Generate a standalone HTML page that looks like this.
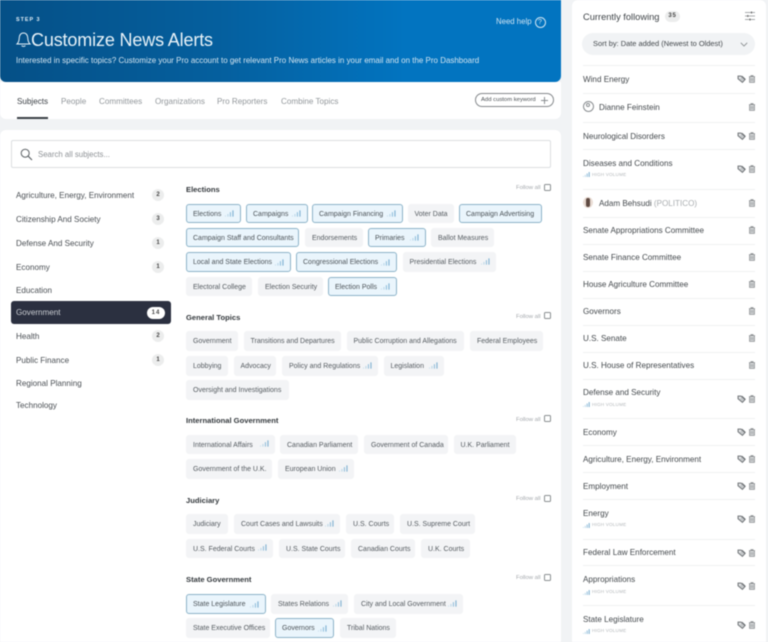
<!DOCTYPE html>
<html><head><meta charset="utf-8"><style>
*{box-sizing:border-box}
html,body{margin:0;padding:0;width:768px;height:642px;overflow:hidden;background:#f1f3f5;font-family:"Liberation Sans",sans-serif}
#r{position:relative;width:768px;height:642px;overflow:hidden;filter:blur(.4px)}
.a,.c,.s,.l,.i,.h,.f,.b,.n,.v,.t,.d,.x,.g,.k{position:absolute;white-space:nowrap}
.c,.s{height:19.500px;line-height:21px;font-size:7px;color:#555b60;padding-left:7px;background:#f3f4f6;border-radius:3px}
.s{background:#eaf5fc;border:1px solid #8db3c9;padding-left:6px;line-height:19.500px;color:#4c5358}
.c svg,.s svg{position:absolute;right:6px;top:5.500px;opacity:.8}
.l{left:16px;font-size:8.100px;color:#4a4f54;line-height:12px;margin-top:1px}
.b{left:152px;width:12px;height:12px;border-radius:50%;background:#eceded;font-size:6px;font-weight:bold;line-height:12px;text-align:center;color:#444}
.h{left:186px;font-size:7.600px;font-weight:bold;color:#33383c;line-height:10px;margin-top:.5px}
.f{left:516px;font-size:5.900px;color:#a5a9ad;line-height:8px;margin-top:1px}
.k{left:544px;width:7px;height:7px;border:.8px solid #8b8f92;border-radius:1.500px;background:#fff}
.n{left:583px;font-size:8.100px;color:#44494d;line-height:12px;margin-top:1px}
.v{left:592px;font-size:4.600px;color:#b3b7ba;line-height:6px;letter-spacing:.2px}
.d{left:583px;width:172px;height:1px;background:#f0f1f2}
.t{left:747.500px}.x{left:737px}
.g{left:583px}
</style></head><body><div id="r">
<svg width="0" height="0" style="position:absolute"><defs>
<symbol id="sg" viewBox="0 0 10 7"><rect x="0" y="5.600" width="1.100" height="1.400" fill="#c3dceb"/><rect x="2.700" y="4" width="1.100" height="3" fill="#a8cde3"/><rect x="5.400" y="2" width="1.200" height="5" fill="#7ab1d4"/><rect x="8.200" y="0" width="1.300" height="7" fill="#6aa5cb"/></symbol>
<symbol id="tr" viewBox="0 0 8 8"><path d="M1 1.600H7M3 1.600V.7H5V1.600M1.600 1.600V7.400H6.400V1.600Z" fill="#dfe1e2" stroke="#85898c" stroke-width=".8"/><path d="M3.200 3V6.200M4.800 3V6.200" stroke="#85898c" stroke-width=".7"/></symbol>
<symbol id="tg" viewBox="0 0 9 8"><path d="M1 1H4L8 4.600 5.400 7.400 1 3.800Z" fill="#c4c7c9" stroke="#62666a" stroke-width=".8"/><circle cx="3" cy="2.800" r=".7" fill="#fff"/><path d="M5 1 8.600 4.400" fill="none" stroke="#6a6e72" stroke-width=".7"/></symbol>
</defs></svg>

<div class="a" style="left:0;top:0;width:561px;height:82px;border-radius:0 0 6px 6px;background:linear-gradient(90deg,#055087 0%,#05609f 40%,#0274c0 72%,#0274c0 100%)"></div>
<div class="a" style="left:16px;top:17px;font-size:5.400px;font-weight:bold;letter-spacing:1px;color:#e6f0f7;line-height:7px">STEP 3</div>
<svg class="a" style="left:16px;top:31px" width="15" height="17" viewBox="0 0 15 17"><path d="M1 13H14C12.400 11.600 12 10.200 11.800 7.400 11.600 4 10 2 7.500 2S3.400 4 3.200 7.400C3 10.200 2.600 11.600 1 13ZM5.600 14.600C6.600 15.600 8.400 15.600 9.400 14.600" fill="none" stroke="#e8f2f8" stroke-width="1"/></svg>
<div class="a" style="left:31px;top:29px;font-size:18px;color:#e8f2f8;line-height:22px;letter-spacing:-.15px">Customize News Alerts</div>
<div class="a" style="left:16px;top:55px;font-size:7.950px;color:#d3e5f1;line-height:11px;letter-spacing:.02px">Interested in specific topics? Customize your Pro account to get relevant Pro News articles in your email and on the Pro Dashboard</div>
<div class="a" style="left:496px;top:16px;font-size:7.800px;color:#cfe4f3;line-height:12px">Need help</div>
<div class="a" style="left:534.500px;top:16.500px;width:11px;height:11px;border:1px solid #cfe4f3;border-radius:50%;font-size:7px;line-height:9px;text-align:center;color:#cfe4f3">?</div>

<div class="a" style="left:0;top:82px;width:561px;height:37px;background:#fff;border-radius:0 0 6px 6px"></div>
<div class="a" style="left:17px;top:95.500px;font-size:8.100px;color:#3c4146;line-height:12px">Subjects</div>
<div class="a" style="left:17px;top:117px;width:31px;height:1.500px;background:#3b4046"></div>
<div class="a" style="left:61px;top:95.500px;font-size:8.100px;color:#92979b;line-height:12px">People</div>
<div class="a" style="left:99px;top:95.500px;font-size:8.100px;color:#92979b;line-height:12px">Committees</div>
<div class="a" style="left:155px;top:95.500px;font-size:8.100px;color:#92979b;line-height:12px">Organizations</div>
<div class="a" style="left:217px;top:95.500px;font-size:8.100px;color:#92979b;line-height:12px">Pro Reporters</div>
<div class="a" style="left:281px;top:95.500px;font-size:8.100px;color:#92979b;line-height:12px">Combine Topics</div>
<div class="a" style="left:475px;top:93px;width:79px;height:14px;border:1px solid #85898c;border-radius:7px;font-size:5.900px;line-height:12px;padding-left:5px;color:#4b5054">Add custom keyword</div>
<div class="a" style="left:541px;top:99.500px;width:7px;height:1px;background:#8a8e91"></div>
<div class="a" style="left:544px;top:96.500px;width:1px;height:7px;background:#8a8e91"></div>

<div class="a" style="left:0;top:130px;width:561px;height:512px;background:#fff;border-radius:6px 6px 0 0"></div>
<div class="a" style="left:11px;top:140px;width:540px;height:27.500px;border:1px solid #dcdfe1;border-radius:2px;background:#fff"></div>
<svg class="a" style="left:20px;top:148px" width="13" height="13" viewBox="0 0 13 13"><circle cx="5.200" cy="5.200" r="4" fill="none" stroke="#5c6165" stroke-width="1"/><path d="M8.200 8.200 12 12" stroke="#5c6165" stroke-width="1.100"/></svg>
<div class="a" style="left:38px;top:149px;font-size:7.800px;color:#8e9296;line-height:12px">Search all subjects...</div>

<div class="l" style="top:189px">Agriculture, Energy, Environment</div><div class="b" style="top:189px">2</div>
<div class="l" style="top:213px">Citizenship And Society</div><div class="b" style="top:213px">3</div>
<div class="l" style="top:237px">Defense And Security</div><div class="b" style="top:237px">1</div>
<div class="l" style="top:261px">Economy</div><div class="b" style="top:261px">1</div>
<div class="l" style="top:284px">Education</div>
<div class="a" style="left:11px;top:301px;width:159.500px;height:23px;border-radius:3px;background:#2b3040"></div>
<div class="l" style="top:305.500px;color:#c9ccd1">Government</div>
<div class="a" style="left:147px;top:306.500px;width:18px;height:12px;border-radius:6px;background:#fff;font-size:6px;font-weight:bold;line-height:12px;text-align:center;color:#444;letter-spacing:1px">14</div>
<div class="l" style="top:330px">Health</div><div class="b" style="top:330px">2</div>
<div class="l" style="top:354px">Public Finance</div><div class="b" style="top:354px">1</div>
<div class="l" style="top:377px">Regional Planning</div>
<div class="l" style="top:399px">Technology</div>

<div class="h" style="top:184px">Elections</div>
<div class="f" style="top:183px">Follow all</div><div class="k" style="top:183.500px"></div>
<div class="s" style="left:186px;top:203.500px;width:55px">Elections<svg width="9" height="7"><use href="#sg"/></svg></div>
<div class="s" style="left:246px;top:203.500px;width:61.500px">Campaigns<svg width="9" height="7"><use href="#sg"/></svg></div>
<div class="s" style="left:312px;top:203.500px;width:90.500px">Campaign Financing<svg width="9" height="7"><use href="#sg"/></svg></div>
<div class="c" style="left:407.500px;top:203.500px;width:46px">Voter Data</div>
<div class="s" style="left:459px;top:203.500px;width:82.500px">Campaign Advertising</div>
<div class="s" style="left:186px;top:227.500px;width:113px">Campaign Staff and Consultants</div>
<div class="c" style="left:305px;top:227.500px;width:58px">Endorsements</div>
<div class="s" style="left:368px;top:227.500px;width:57.500px">Primaries<svg width="9" height="7"><use href="#sg"/></svg></div>
<div class="c" style="left:431px;top:227.500px;width:63px">Ballot Measures</div>
<div class="s" style="left:186px;top:252px;width:104.500px">Local and State Elections<svg width="9" height="7"><use href="#sg"/></svg></div>
<div class="s" style="left:296px;top:252px;width:101px">Congressional Elections<svg width="9" height="7"><use href="#sg"/></svg></div>
<div class="c" style="left:402.500px;top:252px;width:93.500px">Presidential Elections<svg width="9" height="7"><use href="#sg"/></svg></div>
<div class="c" style="left:186px;top:276.500px;width:66px">Electoral College</div>
<div class="c" style="left:258px;top:276.500px;width:65px">Election Security</div>
<div class="s" style="left:328px;top:276.500px;width:69px">Election Polls<svg width="9" height="7"><use href="#sg"/></svg></div>

<div class="h" style="top:312.500px">General Topics</div>
<div class="f" style="top:311.500px">Follow all</div><div class="k" style="top:312px"></div>
<div class="c" style="left:186px;top:331px;width:52px">Government</div>
<div class="c" style="left:243.500px;top:331px;width:97.500px">Transitions and Departures</div>
<div class="c" style="left:346.500px;top:331px;width:117.500px">Public Corruption and Allegations</div>
<div class="c" style="left:470px;top:331px;width:72.500px">Federal Employees</div>
<div class="c" style="left:186px;top:356px;width:42px">Lobbying</div>
<div class="c" style="left:233.500px;top:356px;width:42.500px">Advocacy</div>
<div class="c" style="left:282px;top:356px;width:96px">Policy and Regulations<svg width="9" height="7"><use href="#sg"/></svg></div>
<div class="c" style="left:383.500px;top:356px;width:60.500px">Legislation<svg width="9" height="7"><use href="#sg"/></svg></div>
<div class="c" style="left:186px;top:380px;width:103px">Oversight and Investigations</div>

<div class="h" style="top:415.500px">International Government</div>
<div class="f" style="top:414.500px">Follow all</div><div class="k" style="top:415px"></div>
<div class="c" style="left:186px;top:434.500px;width:89px">International Affairs<svg width="9" height="7"><use href="#sg"/></svg></div>
<div class="c" style="left:280px;top:434.500px;width:78px">Canadian Parliament</div>
<div class="c" style="left:364px;top:434.500px;width:84px">Government of Canada</div>
<div class="c" style="left:453.500px;top:434.500px;width:62.500px">U.K. Parliament</div>
<div class="c" style="left:186px;top:459px;width:86px">Government of the U.K.</div>
<div class="c" style="left:278px;top:459px;width:76px">European Union<svg width="9" height="7"><use href="#sg"/></svg></div>

<div class="h" style="top:495px">Judiciary</div>
<div class="f" style="top:494px">Follow all</div><div class="k" style="top:494.500px"></div>
<div class="c" style="left:186px;top:514px;width:42px">Judiciary</div>
<div class="c" style="left:234px;top:514px;width:106px">Court Cases and Lawsuits<svg width="9" height="7"><use href="#sg"/></svg></div>
<div class="c" style="left:346px;top:514px;width:48px">U.S. Courts</div>
<div class="c" style="left:400px;top:514px;width:75px">U.S. Supreme Court</div>
<div class="c" style="left:186px;top:538.500px;width:87px">U.S. Federal Courts<svg width="9" height="7"><use href="#sg"/></svg></div>
<div class="c" style="left:279px;top:538.500px;width:66px">U.S. State Courts</div>
<div class="c" style="left:351px;top:538.500px;width:64px">Canadian Courts</div>
<div class="c" style="left:421px;top:538.500px;width:49px">U.K. Courts</div>

<div class="h" style="top:574px">State Government</div>
<div class="f" style="top:573px">Follow all</div><div class="k" style="top:573.500px"></div>
<div class="s" style="left:186px;top:594px;width:80px">State Legislature<svg width="9" height="7"><use href="#sg"/></svg></div>
<div class="c" style="left:271px;top:594px;width:77px">States Relations<svg width="9" height="7"><use href="#sg"/></svg></div>
<div class="c" style="left:354px;top:594px;width:109px">City and Local Government<svg width="9" height="7"><use href="#sg"/></svg></div>
<div class="c" style="left:186px;top:618px;width:84px">State Executive Offices</div>
<div class="s" style="left:275px;top:618px;width:59px">Governors<svg width="9" height="7"><use href="#sg"/></svg></div>
<div class="c" style="left:340px;top:618px;width:56px">Tribal Nations</div>

<div class="a" style="left:572px;top:0;width:194px;height:642px;background:#fff;border-radius:6px 6px 0 0"></div>
<div class="a" style="left:583px;top:10.500px;font-size:9.300px;color:#3f4448;line-height:13px">Currently following</div>
<div class="a" style="left:665px;top:11px;width:15px;height:11px;border-radius:6px;background:#eceded;font-size:6px;font-weight:bold;line-height:11px;text-align:center;color:#444;letter-spacing:.8px">35</div>
<svg class="a" style="left:745px;top:11px" width="10" height="10" viewBox="0 0 10 10"><path d="M0 1.500H10M0 5H10M0 8.500H10" stroke="#8a8e91" stroke-width=".8"/><path d="M6.500 .5V2.500M2.800 4V6M5 7.500V9.500" stroke="#666" stroke-width="1"/></svg>
<div class="a" style="left:582px;top:33px;width:173px;height:21.500px;border-radius:11px;background:#f1f3f5"></div>
<div class="a" style="left:593px;top:37.500px;font-size:7.450px;color:#44494d;line-height:12px">Sort by: Date added (Newest to Oldest)</div>
<svg class="a" style="left:740px;top:42px" width="8" height="5" viewBox="0 0 8 5"><path d="M.8 .8 4 4 7.200 .8" fill="none" stroke="#85898c" stroke-width=".8"/></svg>

<div class="d" style="top:65px"></div><div class="d" style="top:92.500px"></div><div class="d" style="top:122px"></div><div class="d" style="top:149px"></div><div class="d" style="top:189px"></div><div class="d" style="top:216.500px"></div><div class="d" style="top:243.500px"></div><div class="d" style="top:270.500px"></div><div class="d" style="top:297.500px"></div><div class="d" style="top:324.500px"></div><div class="d" style="top:351.500px"></div><div class="d" style="top:378.500px"></div><div class="d" style="top:418px"></div><div class="d" style="top:445px"></div><div class="d" style="top:472px"></div><div class="d" style="top:499px"></div><div class="d" style="top:539px"></div><div class="d" style="top:565px"></div><div class="d" style="top:605px"></div>

<div class="n" style="top:73px">Wind Energy</div>
<svg class="x" style="top:75px" width="9" height="8"><use href="#tg"/></svg><svg class="t" style="top:75px" width="8" height="8"><use href="#tr"/></svg>
<div class="a" style="left:582.500px;top:101px;width:11px;height:11px;border:1px solid #8a8e91;border-radius:50%"></div>
<div class="a" style="left:586px;top:103px;width:4px;height:4px;border:.8px solid #8a8e91;border-radius:50%"></div>
<div class="n" style="left:599px;top:101px">Dianne Feinstein</div>
<svg class="t" style="top:103px" width="8" height="8"><use href="#tr"/></svg>
<div class="n" style="top:129.500px">Neurological Disorders</div>
<svg class="x" style="top:132px" width="9" height="8"><use href="#tg"/></svg><svg class="t" style="top:132px" width="8" height="8"><use href="#tr"/></svg>
<div class="n" style="top:156.500px">Diseases and Conditions</div>
<svg class="g" style="top:172px" width="7" height="5"><use href="#sg"/></svg><div class="v" style="top:172px">HIGH VOLUME</div>
<svg class="x" style="top:165px" width="9" height="8"><use href="#tg"/></svg><svg class="t" style="top:165px" width="8" height="8"><use href="#tr"/></svg>
<div class="a" style="left:583px;top:197px;width:10px;height:11px;border-radius:50%;background:#e9dcd4"></div>
<div class="a" style="left:586px;top:198px;width:4px;height:9px;border-radius:2px;background:#5f4a42"></div>
<div class="n" style="left:599px;top:196.500px">Adam Behsudi <span style="color:#a9adb0">(POLITICO)</span></div>
<svg class="t" style="top:199px" width="8" height="8"><use href="#tr"/></svg>
<div class="n" style="top:224px">Senate Appropriations Committee</div><svg class="t" style="top:226px" width="8" height="8"><use href="#tr"/></svg>
<div class="n" style="top:251px">Senate Finance Committee</div><svg class="t" style="top:253px" width="8" height="8"><use href="#tr"/></svg>
<div class="n" style="top:278px">House Agriculture Committee</div><svg class="t" style="top:280px" width="8" height="8"><use href="#tr"/></svg>
<div class="n" style="top:305px">Governors</div><svg class="t" style="top:307px" width="8" height="8"><use href="#tr"/></svg>
<div class="n" style="top:332px">U.S. Senate</div><svg class="t" style="top:334px" width="8" height="8"><use href="#tr"/></svg>
<div class="n" style="top:359px">U.S. House of Representatives</div><svg class="t" style="top:361px" width="8" height="8"><use href="#tr"/></svg>
<div class="n" style="top:386px">Defense and Security</div>
<svg class="g" style="top:402px" width="7" height="5"><use href="#sg"/></svg><div class="v" style="top:402px">HIGH VOLUME</div>
<svg class="x" style="top:395px" width="9" height="8"><use href="#tg"/></svg><svg class="t" style="top:395px" width="8" height="8"><use href="#tr"/></svg>
<div class="n" style="top:426px">Economy</div>
<svg class="x" style="top:428px" width="9" height="8"><use href="#tg"/></svg><svg class="t" style="top:428px" width="8" height="8"><use href="#tr"/></svg>
<div class="n" style="top:452.500px">Agriculture, Energy, Environment</div>
<svg class="x" style="top:455px" width="9" height="8"><use href="#tg"/></svg><svg class="t" style="top:455px" width="8" height="8"><use href="#tr"/></svg>
<div class="n" style="top:479.500px">Employment</div>
<svg class="x" style="top:482px" width="9" height="8"><use href="#tg"/></svg><svg class="t" style="top:482px" width="8" height="8"><use href="#tr"/></svg>
<div class="n" style="top:507px">Energy</div>
<svg class="g" style="top:523px" width="7" height="5"><use href="#sg"/></svg><div class="v" style="top:522px">HIGH VOLUME</div>
<svg class="x" style="top:515px" width="9" height="8"><use href="#tg"/></svg><svg class="t" style="top:515px" width="8" height="8"><use href="#tr"/></svg>
<div class="n" style="top:546px">Federal Law Enforcement</div>
<svg class="x" style="top:549px" width="9" height="8"><use href="#tg"/></svg><svg class="t" style="top:549px" width="8" height="8"><use href="#tr"/></svg>
<div class="n" style="top:573px">Appropriations</div>
<svg class="g" style="top:590px" width="7" height="5"><use href="#sg"/></svg><div class="v" style="top:589px">HIGH VOLUME</div>
<svg class="x" style="top:582px" width="9" height="8"><use href="#tg"/></svg><svg class="t" style="top:582px" width="8" height="8"><use href="#tr"/></svg>
<div class="n" style="top:613px">State Legislature</div>
<svg class="g" style="top:629px" width="7" height="5"><use href="#sg"/></svg><div class="v" style="top:628px">HIGH VOLUME</div>
<svg class="x" style="top:621px" width="9" height="8"><use href="#tg"/></svg><svg class="t" style="top:621px" width="8" height="8"><use href="#tr"/></svg>
</div></body></html>
